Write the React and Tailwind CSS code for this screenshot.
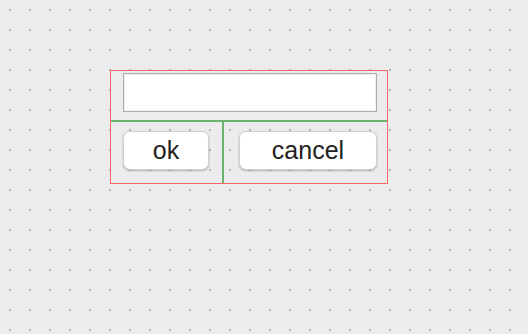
export default function App() {
  return (
    <div
      className="min-h-[334px] w-[528px] bg-[#ececec] bg-[radial-gradient(circle,#b5b5b5_1.1px,transparent_1.5px)] bg-size-[20px_20px] pl-[110px] pt-[70px]"
      style={{ fontFamily: '"Liberation Sans", Arial, sans-serif' }}
    >
      <div className="flex h-[114px] w-[278px] flex-col p-px outline outline-[#ff6666] outline-offset-[-1px]">
        <div className="h-[49px] px-[12px] pt-[2px]">
          <input
            type="text"
            className="block h-[39px] w-[254px] border border-[#adadad] bg-white shadow-[inset_0_0_0_1px_#f0f0f0] outline-none"
          />
        </div>
        <div className="h-[2px] bg-[#6cb36c]" />
        <div className="flex flex-1">
          <div className="w-[111px] pl-[12px] pt-[9px]">
            <button className="h-[39px] w-[86px] rounded-[7px] border border-[#cfcfcf] bg-white text-[25px] leading-none text-[#222] shadow-[0_1px_2px_rgba(0,0,0,0.25)]">
              ok
            </button>
          </div>
          <div className="w-[2px] bg-[#6cb36c]" />
          <div className="flex-1 pl-[15px] pt-[9px]">
            <button className="h-[39px] w-[138px] rounded-[7px] border border-[#cfcfcf] bg-white text-[25px] leading-none text-[#222] shadow-[0_1px_2px_rgba(0,0,0,0.25)]">
              cancel
            </button>
          </div>
        </div>
      </div>
    </div>
  );
}
